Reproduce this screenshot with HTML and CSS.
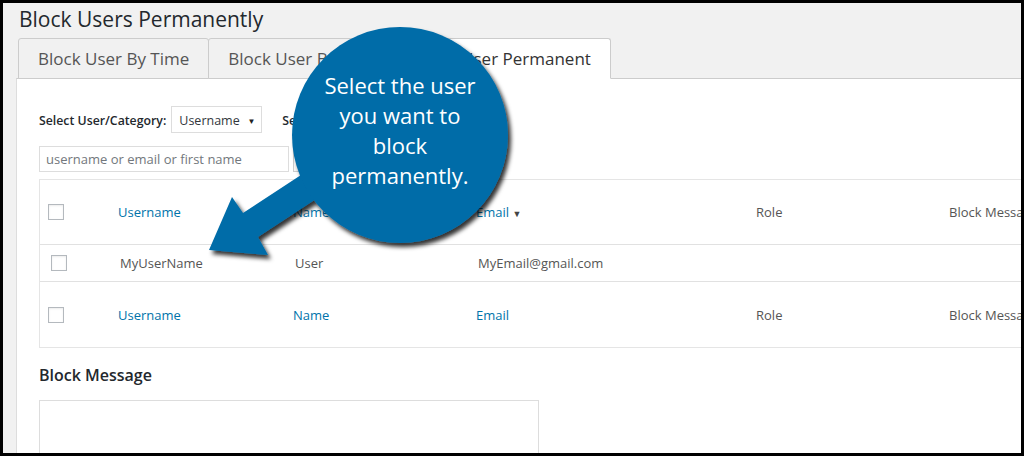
FILE: index.html
```html
<!DOCTYPE html>
<html lang="en">
<head>
<meta charset="utf-8">
<title>Block Users Permanently</title>
<link rel="stylesheet" href="styles.css">
</head>
<body>
<div class="screen">
  <h1 class="page-title">Block Users Permanently</h1>
  <div class="tabs">
    <div class="tab">Block User By Time</div>
    <div class="tab">Block User By Role</div>
    <div class="tab tab-active">Block User Permanent</div>
  </div>
  <div class="panel">
    <div class="filter-row">
      <span class="label">Select User/Category:</span>
      <div class="select"><span>Username</span><span class="caret">▼</span></div>
      <span class="label label-second">Select Role:</span>
    </div>
    <div class="search-row">
      <div class="input">username or email or first name</div>
      <div class="button">Search</div>
    </div>
    <div class="table">
      <div class="row row-head">
        <div class="cell"><span class="checkbox"></span></div>
        <div class="cell link">Username</div>
        <div class="cell link">Name</div>
        <div class="cell link">Email <span class="sort">▼</span></div>
        <div class="cell">Role</div>
        <div class="cell">Block Message</div>
      </div>
      <div class="row row-data">
        <div class="cell"><span class="checkbox"></span></div>
        <div class="cell">MyUserName</div>
        <div class="cell">User</div>
        <div class="cell">MyEmail@gmail.com</div>
        <div class="cell"></div>
        <div class="cell"></div>
      </div>
      <div class="row row-foot">
        <div class="cell"><span class="checkbox"></span></div>
        <div class="cell link">Username</div>
        <div class="cell link">Name</div>
        <div class="cell link">Email</div>
        <div class="cell">Role</div>
        <div class="cell">Block Message</div>
      </div>
    </div>
    <h2 class="section-title">Block Message</h2>
    <div class="textarea"></div>
  </div>

  <svg class="callout-shape" width="340" height="250" viewBox="190 20 340 250" aria-hidden="true">
    <defs>
      <filter id="shadow" x="-10%" y="-10%" width="130%" height="130%">
        <feDropShadow dx="3" dy="4" stdDeviation="2.2" flood-color="#000" flood-opacity="0.8"/>
      </filter>
    </defs>
    <g filter="url(#shadow)" fill="#056ca8">
      <polygon points="209,250 232,197 243,213 330,156 345,180 258,237 268,255"/>
      <circle cx="400" cy="135" r="108"/>
    </g>
  </svg>
  <div class="callout-text">Select the user<br>you want to<br>block<br>permanently.</div>
</div>
</body>
</html>
```

FILE: styles.css
```css
html, body {
  margin: 0;
  padding: 0;
  background: #000;
}

.screen {
  position: relative;
  margin: 3px;
  width: 1018px;
  height: 450px;
  overflow: hidden;
  background: #f1f1f1;
  font-family: "Open Sans", "Liberation Sans", sans-serif;
  color: #23282d;
}

.page-title {
  margin: 2px 0 0 16px;
  font-size: 21px;
  font-weight: 400;
  line-height: 28px;
  color: #23282d;
}

.tabs {
  display: flex;
  margin: 5px 0 0 15px;
}

.tab {
  position: relative;
  height: 39px;
  line-height: 39px;
  padding: 0 19px;
  border: 1px solid #ccc;
  border-radius: 3px 3px 0 0;
  margin-bottom: -1px;
  background: #f1f1f1;
  font-size: 17px;
  color: #555;
  white-space: nowrap;
}

.tab + .tab {
  margin-left: -1px;
}

.tab-active {
  background: #fff;
  border-bottom-color: #fff;
  color: #333;
}

.panel {
  margin-left: 13px;
  height: 400px;
  padding: 27px 0 0 22px;
  background: #fff;
  border-left: 1px solid #ddd;
  border-top: 1px solid #ccc;
}

.filter-row {
  display: flex;
  align-items: center;
  height: 27px;
}

.label {
  font-size: 12.3px;
  font-weight: 600;
  line-height: 27px;
  padding-top: 2px;
  color: #23282d;
}

.label-second {
  margin-left: 20px;
}

.select {
  display: flex;
  align-items: center;
  justify-content: space-between;
  box-sizing: border-box;
  width: 91px;
  height: 27px;
  margin-left: 5px;
  padding: 1px 6px 0 7px;
  border: 1px solid #ddd;
  background: #fff;
  font-size: 12.5px;
  color: #32373c;
}

.caret {
  font-size: 8px;
  color: #222;
}

.search-row {
  display: flex;
  margin-top: 13px;
  height: 26px;
}

.input {
  box-sizing: border-box;
  width: 250px;
  height: 26px;
  padding: 0 6px;
  border: 1px solid #ddd;
  font-size: 13px;
  line-height: 24px;
  color: #72777c;
  background: #fff;
}

.button {
  box-sizing: border-box;
  height: 26px;
  margin-left: 4px;
  padding: 0 10px;
  border: 1px solid #ccc;
  background: #f7f7f7;
  font-size: 13px;
  line-height: 24px;
  color: #555;
}

.table {
  margin-top: 7px;
  width: 1150px;
  border: 1px solid #e5e5e5;
  font-size: 13px;
}

.row {
  display: grid;
  grid-template-columns: 69px 175px 183px 280px 193px 250px;
  align-items: center;
}

.row-head {
  height: 64px;
  border-bottom: 1px solid #e1e1e1;
}

.row-data {
  height: 36px;
  border-bottom: 1px solid #e1e1e1;
  color: #555;
}

.row-foot {
  height: 65px;
}

.cell {
  padding-left: 9px;
  white-space: nowrap;
  color: #555;
}

.row-head .cell:first-child,
.row-foot .cell:first-child {
  padding-left: 8px;
}

.row-data .cell {
  padding-left: 11px;
}

.cell.link {
  color: #0073aa;
}

.sort {
  font-size: 9px;
  color: #444;
}

.checkbox {
  display: block;
  box-sizing: border-box;
  width: 16px;
  height: 16px;
  border: 1px solid #b4b9be;
  background: #fff;
  box-shadow: inset 0 1px 2px rgba(0, 0, 0, 0.08);
}

.section-title {
  margin: 16px 0 0;
  font-size: 16px;
  font-weight: 600;
  line-height: 22px;
  color: #23282d;
}

.textarea {
  box-sizing: border-box;
  width: 500px;
  height: 120px;
  margin-top: 14px;
  border: 1px solid #ddd;
  background: #fff;
}

.callout-shape {
  position: absolute;
  left: 187px;
  top: 17px;
}

.callout-text {
  position: absolute;
  left: 297px;
  top: 67px;
  width: 200px;
  text-align: center;
  font-family: "Open Sans", "Liberation Sans", sans-serif;
  font-size: 22px;
  line-height: 30px;
  color: #fff;
}
```
